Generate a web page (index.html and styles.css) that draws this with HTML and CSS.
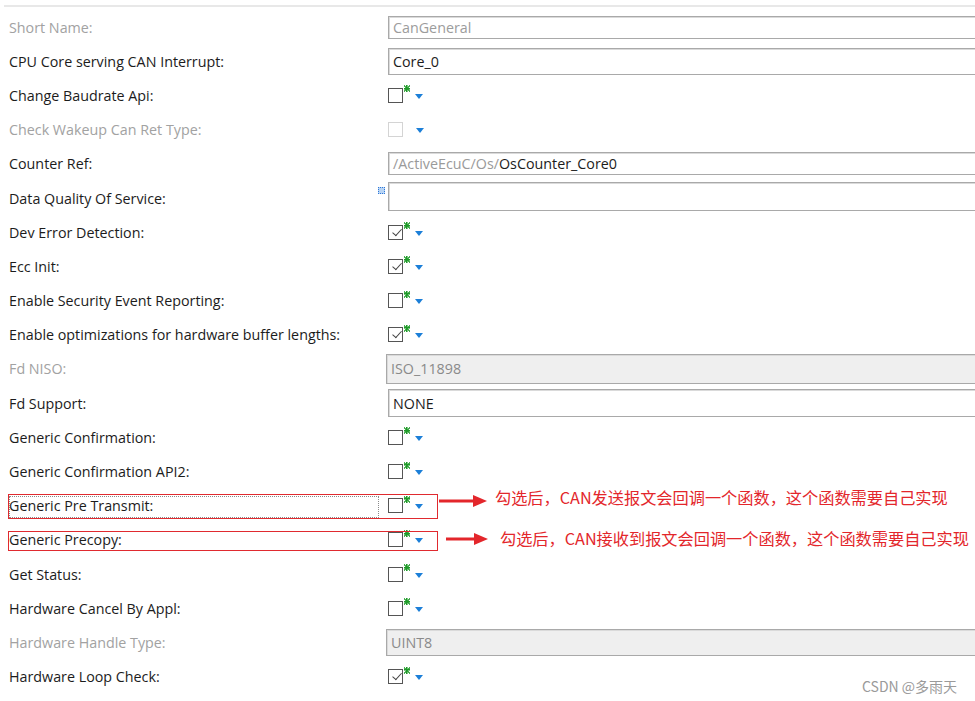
FILE: index.html
```html
<!DOCTYPE html>
<html>
<head>
<meta charset="utf-8">
<link rel="stylesheet" href="styles.css">
</head>
<body>
<div class="page">
  <div class="topline"></div>
  <div class="form">
    <div class="label dis">Short Name:</div>
    <div class="cell"><div class="field dis h23">CanGeneral</div></div>

    <div class="label">CPU Core serving CAN Interrupt:</div>
    <div class="cell"><div class="field h27">Core_0</div></div>

    <div class="label">Change Baudrate Api:</div>
    <div class="cell"><div class="chk"><span class="box"></span><span class="star"></span><span class="tri"></span></div></div>

    <div class="label dis">Check Wakeup Can Ret Type:</div>
    <div class="cell"><div class="chk off"><span class="box"></span><span class="star"></span><span class="tri"></span></div></div>

    <div class="label">Counter Ref:</div>
    <div class="cell"><div class="field h23"><span class="gray">/ActiveEcuC/Os/</span>OsCounter_Core0</div></div>

    <div class="label">Data Quality Of Service:</div>
    <div class="cell"><div class="field h29 up"></div><span class="dq"></span></div>

    <div class="label">Dev Error Detection:</div>
    <div class="cell"><div class="chk"><span class="box on"></span><span class="star"></span><span class="tri"></span></div></div>

    <div class="label">Ecc Init:</div>
    <div class="cell"><div class="chk"><span class="box on"></span><span class="star"></span><span class="tri"></span></div></div>

    <div class="label">Enable Security Event Reporting:</div>
    <div class="cell"><div class="chk"><span class="box"></span><span class="star"></span><span class="tri"></span></div></div>

    <div class="label">Enable optimizations for hardware buffer lengths:</div>
    <div class="cell"><div class="chk"><span class="box on"></span><span class="star"></span><span class="tri"></span></div></div>

    <div class="label dis">Fd NISO:</div>
    <div class="cell"><div class="field ro h30">ISO_11898</div></div>

    <div class="label">Fd Support:</div>
    <div class="cell"><div class="field h28">NONE</div></div>

    <div class="label">Generic Confirmation:</div>
    <div class="cell"><div class="chk"><span class="box"></span><span class="star"></span><span class="tri"></span></div></div>

    <div class="label">Generic Confirmation API2:</div>
    <div class="cell"><div class="chk"><span class="box"></span><span class="star"></span><span class="tri"></span></div></div>

    <div class="label">Generic Pre Transmit:</div>
    <div class="cell"><div class="chk"><span class="box"></span><span class="star"></span><span class="tri"></span></div></div>

    <div class="label">Generic Precopy:</div>
    <div class="cell"><div class="chk"><span class="box"></span><span class="star"></span><span class="tri"></span></div></div>

    <div class="label">Get Status:</div>
    <div class="cell"><div class="chk"><span class="box"></span><span class="star"></span><span class="tri"></span></div></div>

    <div class="label">Hardware Cancel By Appl:</div>
    <div class="cell"><div class="chk"><span class="box"></span><span class="star"></span><span class="tri"></span></div></div>

    <div class="label dis">Hardware Handle Type:</div>
    <div class="cell"><div class="field ro h27">UINT8</div></div>

    <div class="label">Hardware Loop Check:</div>
    <div class="cell"><div class="chk"><span class="box on"></span><span class="star"></span><span class="tri"></span></div></div>
  </div>

  <div class="focus"></div>
  <div class="mark mark1"></div>
  <div class="mark mark2"></div>
  <svg class="arrow arrow1" width="48" height="14" viewBox="0 0 48 14"><path d="M0 7 H36" stroke="#e3262b" stroke-width="3"/><path d="M34 1 L48 7 L34 13 Z" fill="#e3262b"/></svg>
  <svg class="arrow arrow2" width="42" height="14" viewBox="0 0 42 14"><path d="M0 7 H30" stroke="#e3262b" stroke-width="3"/><path d="M28 1 L42 7 L28 13 Z" fill="#e3262b"/></svg>
  <div class="note note1">勾选后，CAN发送报文会回调一个函数，这个函数需要自己实现</div>
  <div class="note note2">勾选后，CAN接收到报文会回调一个函数，这个函数需要自己实现</div>
  <div class="wm">CSDN @多雨天</div>
</div>
</body>
</html>
```
FILE: styles.css
```css
html, body {
  margin: 0;
  padding: 0;
  background: #fff;
  overflow: hidden;
}
body {
  font-family: "Open Sans", "Noto Sans", sans-serif;
  font-size: 14.3px;
  color: #1c1c1c;
}
.page {
  position: relative;
  width: 975px;
  height: 701px;
  overflow: hidden;
}
.topline {
  height: 2px;
  margin: 5px 0 0 4px;
  background: #e8e8e8;
}
.form {
  display: grid;
  grid-template-columns: 379px 1fr;
  grid-auto-rows: 34.2px;
  align-items: center;
  padding: 3px 0 0 9px;
}
.label {
  white-space: nowrap;
}
.label.dis { color: #a2a2a2; }
.cell {
  position: relative;
  display: flex;
  align-items: center;
  height: 100%;
}
.field {
  box-sizing: border-box;
  flex: 0 0 auto;
  width: calc(100% + 12px);
  border: 1px solid #a9a9a9;
  box-shadow: inset 1px 1px 0 #dadada;
  padding: 0 0 0 4px;
  display: flex;
  align-items: center;
  background: #fff;
  white-space: nowrap;
}
.field.dis { color: #9c9c9c; }
.field.ro { background: #efefef; color: #8a8a8a; margin-left: -2px; }
.gray { color: #9a9a9a; }
.h23 { height: 23px; }
.h27 { height: 27px; }
.h28 { height: 28px; }
.h29 { height: 29px; }
.h30 { height: 30px; }
.up { margin-top: -3px; }
.dq {
  position: absolute;
  left: -10px;
  top: 6px;
  width: 5px;
  height: 5px;
  border: 1px dotted #2f78d8;
  background: #b8d4f4;
}
.chk {
  display: flex;
  align-items: center;
  height: 16px;
}
.box {
  box-sizing: border-box;
  width: 15px;
  height: 15px;
  border: 1.5px solid #555;
  background: #fff;
  position: relative;
}
.box.on::after {
  content: "";
  position: absolute;
  left: 2px;
  top: 0px;
  width: 8px;
  height: 4px;
  border-left: 1.6px solid #444;
  border-bottom: 1.6px solid #444;
  transform: rotate(-48deg) translate(-1px, 3px);
}
.star {
  width: 6px;
  height: 7px;
  align-self: flex-start;
  margin-top: -2px;
  margin-left: 1px;
  background:
    linear-gradient(#1e9a28, #1e9a28) center / 1.6px 7px no-repeat,
    linear-gradient(#1e9a28, #1e9a28) center / 6px 1.6px no-repeat;
  position: relative;
}
.star::after {
  content: "";
  position: absolute;
  inset: 0;
  background:
    linear-gradient(45deg, transparent 42%, #1e9a28 42%, #1e9a28 58%, transparent 58%),
    linear-gradient(-45deg, transparent 42%, #1e9a28 42%, #1e9a28 58%, transparent 58%);
  opacity: 0.8;
}
.tri {
  width: 0;
  height: 0;
  margin-left: 5px;
  margin-top: 2px;
  border-left: 4px solid transparent;
  border-right: 4px solid transparent;
  border-top: 5px solid #1c7fd8;
}
.chk.off .box { border: 1px solid #d4d4d4; }
.chk.off .star { visibility: hidden; }
.chk.off .tri { margin-left: 6px; }

.focus {
  position: absolute;
  left: 9px;
  top: 496px;
  width: 368px;
  height: 20px;
  border: 1px dotted #8a8a8a;
}
.mark {
  position: absolute;
  border: 1.5px solid #e02a2f;
  box-sizing: border-box;
}
.mark1 { left: 8px; top: 494px; width: 430px; height: 25px; }
.mark2 { left: 8px; top: 531px; width: 430px; height: 20px; }
.arrow { position: absolute; }
.arrow1 { left: 439px; top: 494px; }
.arrow2 { left: 446px; top: 532px; }
.note {
  position: absolute;
  font-family: "Noto Sans CJK SC", sans-serif;
  font-size: 16.2px;
  color: #e3262b;
  white-space: nowrap;
  line-height: 20px;
}
.note1 { left: 495px; top: 487px; }
.note2 { left: 500px; top: 528px; }
.wm {
  position: absolute;
  left: 862px;
  top: 676px;
  font-family: "Noto Sans CJK SC", sans-serif;
  font-size: 14px;
  color: #9a9a9a;
  line-height: 20px;
}
```
